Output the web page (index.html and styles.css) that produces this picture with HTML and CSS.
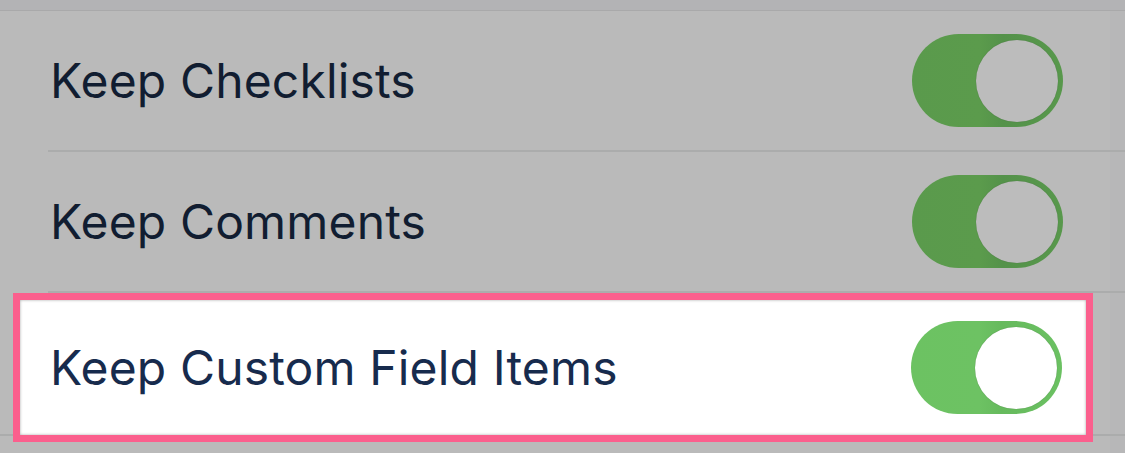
FILE: index.html
```html
<!DOCTYPE html>
<html>
<head>
<meta charset="utf-8">
<link rel="stylesheet" href="styles.css">
</head>
<body>
<div class="screen">
  <div class="topbar"></div>
  <div class="list">
    <div class="row dim">
      <span class="label">Keep Checklists</span>
      <span class="toggle"><span class="knob"></span></span>
    </div>
    <div class="row dim">
      <span class="label">Keep Comments</span>
      <span class="toggle"><span class="knob"></span></span>
    </div>
    <div class="hl-wrap">
      <div class="row hl">
        <span class="label">Keep Custom Field Items</span>
        <span class="toggle on"><span class="knob"></span></span>
      </div>
    </div>
  </div>
</div>
</body>
</html>
```
FILE: styles.css
```css
html, body {
  margin: 0;
  padding: 0;
}
body {
  width: 1125px;
  height: 453px;
  overflow: hidden;
  background: #bababa;
  font-family: "Inter", "Liberation Sans", sans-serif;
}
.screen {
  width: 1125px;
  height: 453px;
  display: flex;
  flex-direction: column;
  background: linear-gradient(to right, #bababa 0, #bababa 1110px, #b7b7b8 1110px);
}
.topbar {
  height: 10px;
  background: #b3b3b5;
  border-bottom: 1px solid #a9a9aa;
  flex: none;
}
.list {
  display: flex;
  flex-direction: column;
}
.row {
  display: flex;
  align-items: center;
  justify-content: space-between;
  box-sizing: border-box;
}
.row.dim {
  height: 141px;
  margin-left: 48px;
  padding-left: 2px;
  padding-right: 62px;
  border-bottom: 2px solid #abacac;
}
.label {
  font-size: 48px;
  color: #111d31;
  letter-spacing: 0.15px;
}
.toggle {
  width: 151px;
  height: 93px;
  border-radius: 47px;
  background: linear-gradient(to right, #5a9a4c 0, #5b9b4c 45%, #54924a 60%, #58984c 100%);
  box-sizing: border-box;
  padding: 5px 5px 5px 0;
  display: flex;
  justify-content: flex-end;
  align-items: center;
  flex: none;
}
.knob {
  width: 82px;
  height: 82px;
  border-radius: 50%;
  background: #bcbcbc;
  box-shadow: 0 0 1px rgba(0,0,0,0.25);
}
.toggle.on {
  background: linear-gradient(to right, #6cc262 0, #6dc263 45%, #66ba5d 60%, #6bc162 100%);
}
.toggle.on .knob {
  background: #ffffff;
  box-shadow: 0 0 1px rgba(0,0,0,0.3);
}
.hl-wrap {
  padding-left: 13px;
  height: 160px;
  box-sizing: border-box;
  background: linear-gradient(to bottom, transparent 141px, #abacac 141px, #abacac 143px, transparent 143px);
}
.row.hl {
  width: 1080px;
  height: 149px;
  background: #ffffff;
  border: 7px solid #fb5f8d;
  box-shadow: inset 0 0 3px rgba(0,0,0,0.35);
  padding-left: 30px;
  padding-right: 24px;
}
.row.hl .label {
  color: #172b4d;
}
```
